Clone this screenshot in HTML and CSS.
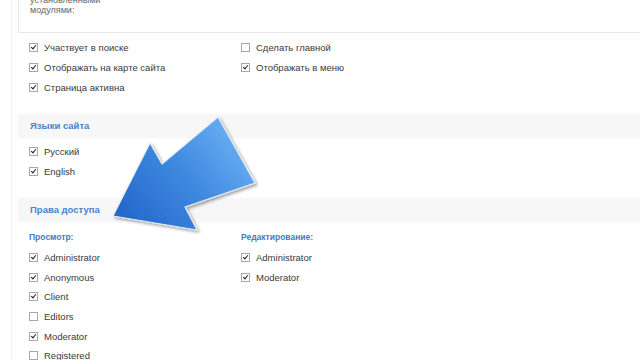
FILE: index.html
```html
<!DOCTYPE html>
<html lang="ru">
<head>
    <meta charset="UTF-8">
    <title>Свойства страницы</title>
    <link rel="stylesheet" href="styles.css">
</head>
<body>
    <div class="page">
        <div class="intro">
            установленными<br>
            модулями:
        </div>

        <div class="options">
            <label class="row"><span class="cb on"></span>Участвует в поиске</label>
            <label class="row"><span class="cb"></span>Сделать главной</label>
            <label class="row"><span class="cb on"></span>Отображать на карте сайта</label>
            <label class="row"><span class="cb on"></span>Отображать в меню</label>
            <label class="row"><span class="cb on"></span>Страница активна</label>
        </div>

        <div class="band">Языки сайта</div>
        <div class="list">
            <label class="row"><span class="cb on"></span>Русский</label>
            <label class="row"><span class="cb on"></span>English</label>
        </div>

        <div class="band">Права доступа</div>
        <div class="access">
            <div class="col">
                <div class="subhead">Просмотр:</div>
                <label class="row"><span class="cb on"></span>Administrator</label>
                <label class="row"><span class="cb on"></span>Anonymous</label>
                <label class="row"><span class="cb on"></span>Client</label>
                <label class="row"><span class="cb"></span>Editors</label>
                <label class="row"><span class="cb on"></span>Moderator</label>
                <label class="row"><span class="cb"></span>Registered</label>
            </div>
            <div class="col">
                <div class="subhead">Редактирование:</div>
                <label class="row"><span class="cb on"></span>Administrator</label>
                <label class="row"><span class="cb on"></span>Moderator</label>
            </div>
        </div>
    </div>

    <!-- pointer arrow drawn over the form -->
    <svg class="arrow" width="640" height="360" viewBox="0 0 640 360">
        <defs>
            <linearGradient id="arrowFill" x1="235" y1="125" x2="125" y2="215" gradientUnits="userSpaceOnUse">
                <stop offset="0" stop-color="#6cb0f3"/>
                <stop offset="0.5" stop-color="#3e89e0"/>
                <stop offset="1" stop-color="#2569cc"/>
            </linearGradient>
            <filter id="arrowShadow" x="-20%" y="-20%" width="140%" height="140%">
                <feGaussianBlur in="SourceAlpha" stdDeviation="1.5"/>
                <feOffset dx="2" dy="2" result="blur"/>
                <feComponentTransfer><feFuncA type="linear" slope="0.35"/></feComponentTransfer>
                <feMerge><feMergeNode/><feMergeNode in="SourceGraphic"/></feMerge>
            </filter>
        </defs>
        <polygon filter="url(#arrowShadow)" fill="url(#arrowFill)" stroke="#e4ecf5" stroke-width="1.2" stroke-linejoin="round"
                 points="113,216 150,143 162,164 218,117 255,183 185,207 197,230"/>
    </svg>
</body>
</html>
```

FILE: styles.css
```css
body {
    margin: 0;
    font-family: "Liberation Sans", Arial, sans-serif;
    color: #3a3a3a;
    background: #fff;
    overflow: hidden;
}

.page {
    margin-left: 11px;
    padding-left: 6px;
    border-left: 1px solid #f2f2f2;
    min-height: 360px;
}

.intro {
    margin-top: -5px;
    padding: 0 0 17px 11px;
    border-left: 1px solid #e8e8e8;
    border-bottom: 1px solid #e8e8e8;
    font-size: 9px;
    line-height: 10px;
    color: #666;
}

.options {
    display: grid;
    grid-template-columns: 212px 212px;
    margin-top: 4px;
    padding-left: 11px;
}

.row {
    display: flex;
    align-items: center;
    height: 20px;
    font-size: 9.5px;
    color: #3a3a3a;
}

.cb {
    position: relative;
    box-sizing: border-box;
    width: 9px;
    height: 9px;
    margin-right: 6px;
    border: 1px solid #a8a8a8;
    background: #fff;
    flex: none;
}

.cb.on::after {
    content: "";
    position: absolute;
    left: 2px;
    top: 0;
    width: 2px;
    height: 4px;
    border: solid #222;
    border-width: 0 1.6px 1.6px 0;
    transform: rotate(40deg);
}

.band {
    margin-top: 17px;
    height: 24px;
    line-height: 24px;
    padding-left: 12px;
    background: #f7f7f7;
    color: #4a84c6;
    font-size: 9.5px;
    font-weight: bold;
}

.list {
    margin-top: 3px;
    padding-left: 11px;
}

.access {
    display: grid;
    grid-template-columns: 212px 212px;
    margin-top: 5px;
    padding-left: 11px;
}

.access .row {
    height: 19.6px;
}

.subhead {
    height: 21px;
    line-height: 20px;
    font-size: 8.5px;
    font-weight: bold;
    color: #3f7bc4;
}

.arrow {
    position: absolute;
    top: 0;
    left: 0;
    pointer-events: none;
}
```
